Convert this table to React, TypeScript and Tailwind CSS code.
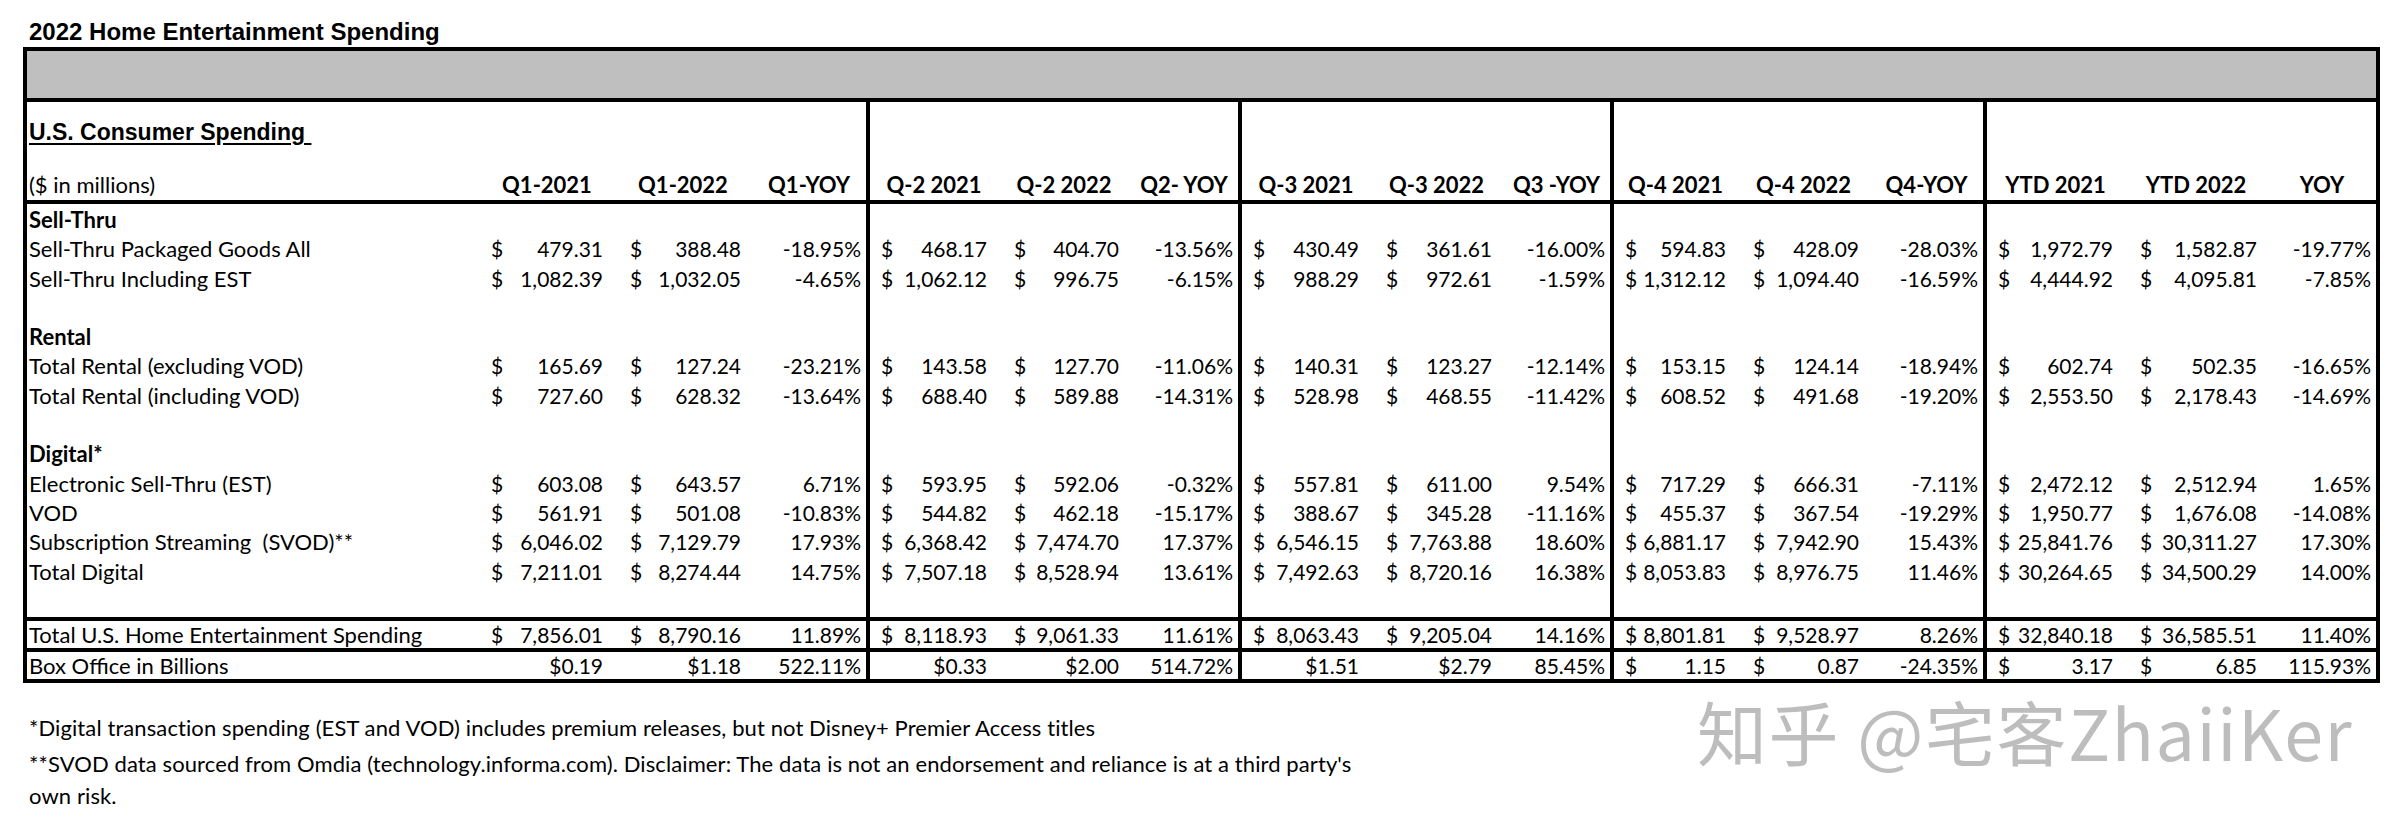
import type { ReactNode } from "react";

const GRID =
  "grid grid-cols-[453px_134px_138px_114px_132px_132px_108px_132px_133px_107px_127px_133px_113px_141px_144px_108px]";

const HEADERS = [
  "Q1-2021", "Q1-2022", "Q1-YOY",
  "Q-2 2021", "Q-2 2022", "Q2- YOY",
  "Q-3 2021", "Q-3 2022", "Q3 -YOY",
  "Q-4 2021", "Q-4 2022", "Q4-YOY",
  "YTD 2021", "YTD 2022", "YOY",
];

type BodyRow =
  | { kind: "section"; label: string }
  | { kind: "blank" }
  | { kind: "data"; label: string; values: string };

const BODY: BodyRow[] = [
  { kind: "section", label: "Sell-Thru" },
  { kind: "data", label: "Sell-Thru Packaged Goods All", values: "479.31 388.48 -18.95% 468.17 404.70 -13.56% 430.49 361.61 -16.00% 594.83 428.09 -28.03% 1,972.79 1,582.87 -19.77%" },
  { kind: "data", label: "Sell-Thru Including EST", values: "1,082.39 1,032.05 -4.65% 1,062.12 996.75 -6.15% 988.29 972.61 -1.59% 1,312.12 1,094.40 -16.59% 4,444.92 4,095.81 -7.85%" },
  { kind: "blank" },
  { kind: "section", label: "Rental" },
  { kind: "data", label: "Total Rental (excluding VOD)", values: "165.69 127.24 -23.21% 143.58 127.70 -11.06% 140.31 123.27 -12.14% 153.15 124.14 -18.94% 602.74 502.35 -16.65%" },
  { kind: "data", label: "Total Rental (including VOD)", values: "727.60 628.32 -13.64% 688.40 589.88 -14.31% 528.98 468.55 -11.42% 608.52 491.68 -19.20% 2,553.50 2,178.43 -14.69%" },
  { kind: "blank" },
  { kind: "section", label: "Digital*" },
  { kind: "data", label: "Electronic Sell-Thru (EST)", values: "603.08 643.57 6.71% 593.95 592.06 -0.32% 557.81 611.00 9.54% 717.29 666.31 -7.11% 2,472.12 2,512.94 1.65%" },
  { kind: "data", label: "VOD", values: "561.91 501.08 -10.83% 544.82 462.18 -15.17% 388.67 345.28 -11.16% 455.37 367.54 -19.29% 1,950.77 1,676.08 -14.08%" },
  { kind: "data", label: "Subscription Streaming  (SVOD)**", values: "6,046.02 7,129.79 17.93% 6,368.42 7,474.70 17.37% 6,546.15 7,763.88 18.60% 6,881.17 7,942.90 15.43% 25,841.76 30,311.27 17.30%" },
  { kind: "data", label: "Total Digital", values: "7,211.01 8,274.44 14.75% 7,507.18 8,528.94 13.61% 7,492.63 8,720.16 16.38% 8,053.83 8,976.75 11.46% 30,264.65 34,500.29 14.00%" },
];

const TOTAL = "7,856.01 8,790.16 11.89% 8,118.93 9,061.33 11.61% 8,063.43 9,205.04 14.16% 8,801.81 9,528.97 8.26% 32,840.18 36,585.51 11.40%";
const BOX_OFFICE = "$0.19 $1.18 522.11% $0.33 $2.00 514.72% $1.51 $2.79 85.45% 1.15 0.87 -24.35% 3.17 6.85 115.93%";

// accounting format: "$" pinned left, number right; "$0.19" and percentages just right-aligned
function Value({ i, v }: { i: number; v: string }) {
  if (v.endsWith("%")) return <div className="pr-[5px] text-right text-[21px]">{v}</div>;
  if (v.startsWith("$")) return <div className="pr-[11px] text-right text-[21px]">{v}</div>;
  return (
    <div className={`flex justify-between pr-[11px] text-[21px] ${i % 3 === 0 ? "pl-[11px]" : "pl-4"}`}>
      <span>$</span>
      <span>{v}</span>
    </div>
  );
}

function Row({
  h,
  label,
  labelClass = "",
  cells = [],
}: {
  h: string;
  label?: ReactNode;
  labelClass?: string;
  cells?: ReactNode[];
}) {
  return (
    <>
      <div className={`${h} pl-[2px] whitespace-pre ${labelClass}`}>{label}</div>
      {Array.from({ length: 15 }, (_, i) => (
        <div key={i} className={`${h} ${i > 0 && i % 3 === 0 ? "border-l-4 border-black" : ""}`}>
          {cells[i]}
        </div>
      ))}
    </>
  );
}

const values = (s: string) => s.split(" ").map((v, i) => <Value key={i} i={i} v={v} />);

export default function App() {
  return (
    <div className="relative h-[829px] w-[2400px] overflow-hidden bg-white pl-[23px] text-black">
      <h1 className="pt-[19px] pl-[6px] font-['Liberation_Sans',Arial,sans-serif] text-[24px] leading-[26px] font-bold">
        2022 Home Entertainment Spending
      </h1>

      <div className="mt-[2px] w-[2357px] border-4 border-black font-[Lato,sans-serif] text-[22px]">
        <div className="h-[51px] border-b-4 border-black bg-[#bfbfbf]" />

        <div className={`${GRID} leading-[29px]`}>
          <Row
            h="h-[62px]"
            labelClass="pt-[17px] font-['Liberation_Sans',Arial,sans-serif] text-[23px] leading-[26px] font-bold underline underline-offset-[3px]"
            label="U.S. Consumer Spending "
          />
          <Row
            h="h-[36px] pt-[8px] leading-[25px]"
            label="($ in millions)"
            cells={HEADERS.map((t) => (
              <div key={t} className="text-center font-bold whitespace-pre">
                {t}
              </div>
            ))}
          />
          <div className="col-span-full h-1 bg-black" />

          {BODY.map((r, n) => {
            const h = n === 0 ? "h-[30.3px] pt-px" : "h-[29.3px]";
            if (r.kind === "blank") return <Row key={n} h={h} />;
            if (r.kind === "section") return <Row key={n} h={h} label={r.label} labelClass="font-bold" />;
            return <Row key={n} h={h} label={r.label} cells={values(r.values)} />;
          })}
          <Row h="h-[31px]" />

          <div className="col-span-full h-1 bg-black" />
          <Row h="h-[27px] leading-[27px]" label="Total U.S. Home Entertainment Spending" cells={values(TOTAL)} />
          <div className="col-span-full h-1 bg-black" />
          <Row h="h-[27px] leading-[27px]" label="Box Office in Billions" cells={values(BOX_OFFICE)} />
        </div>
      </div>

      <div className="mt-[29px] flex w-[1375px] flex-col gap-1 pl-[6px] font-[Lato,sans-serif] text-[22px] leading-[32px] tracking-[0.1px]">
        <p>*Digital transaction spending (EST and VOD) includes premium releases, but not Disney+ Premier Access titles</p>
        <p>
          **SVOD data sourced from Omdia (technology.informa.com). Disclaimer: The data is not an endorsement and
          reliance is at a third party's own risk.
        </p>
      </div>

      {/* site watermark stamped over the bottom right corner */}
      <div className="absolute top-[696px] left-[1697px] font-['Noto_Sans_CJK_SC',sans-serif] text-[70px] leading-none tracking-[1.5px] whitespace-pre text-[#bdbdbd]">
        知乎 @宅客ZhaiiKer
      </div>
    </div>
  );
}
